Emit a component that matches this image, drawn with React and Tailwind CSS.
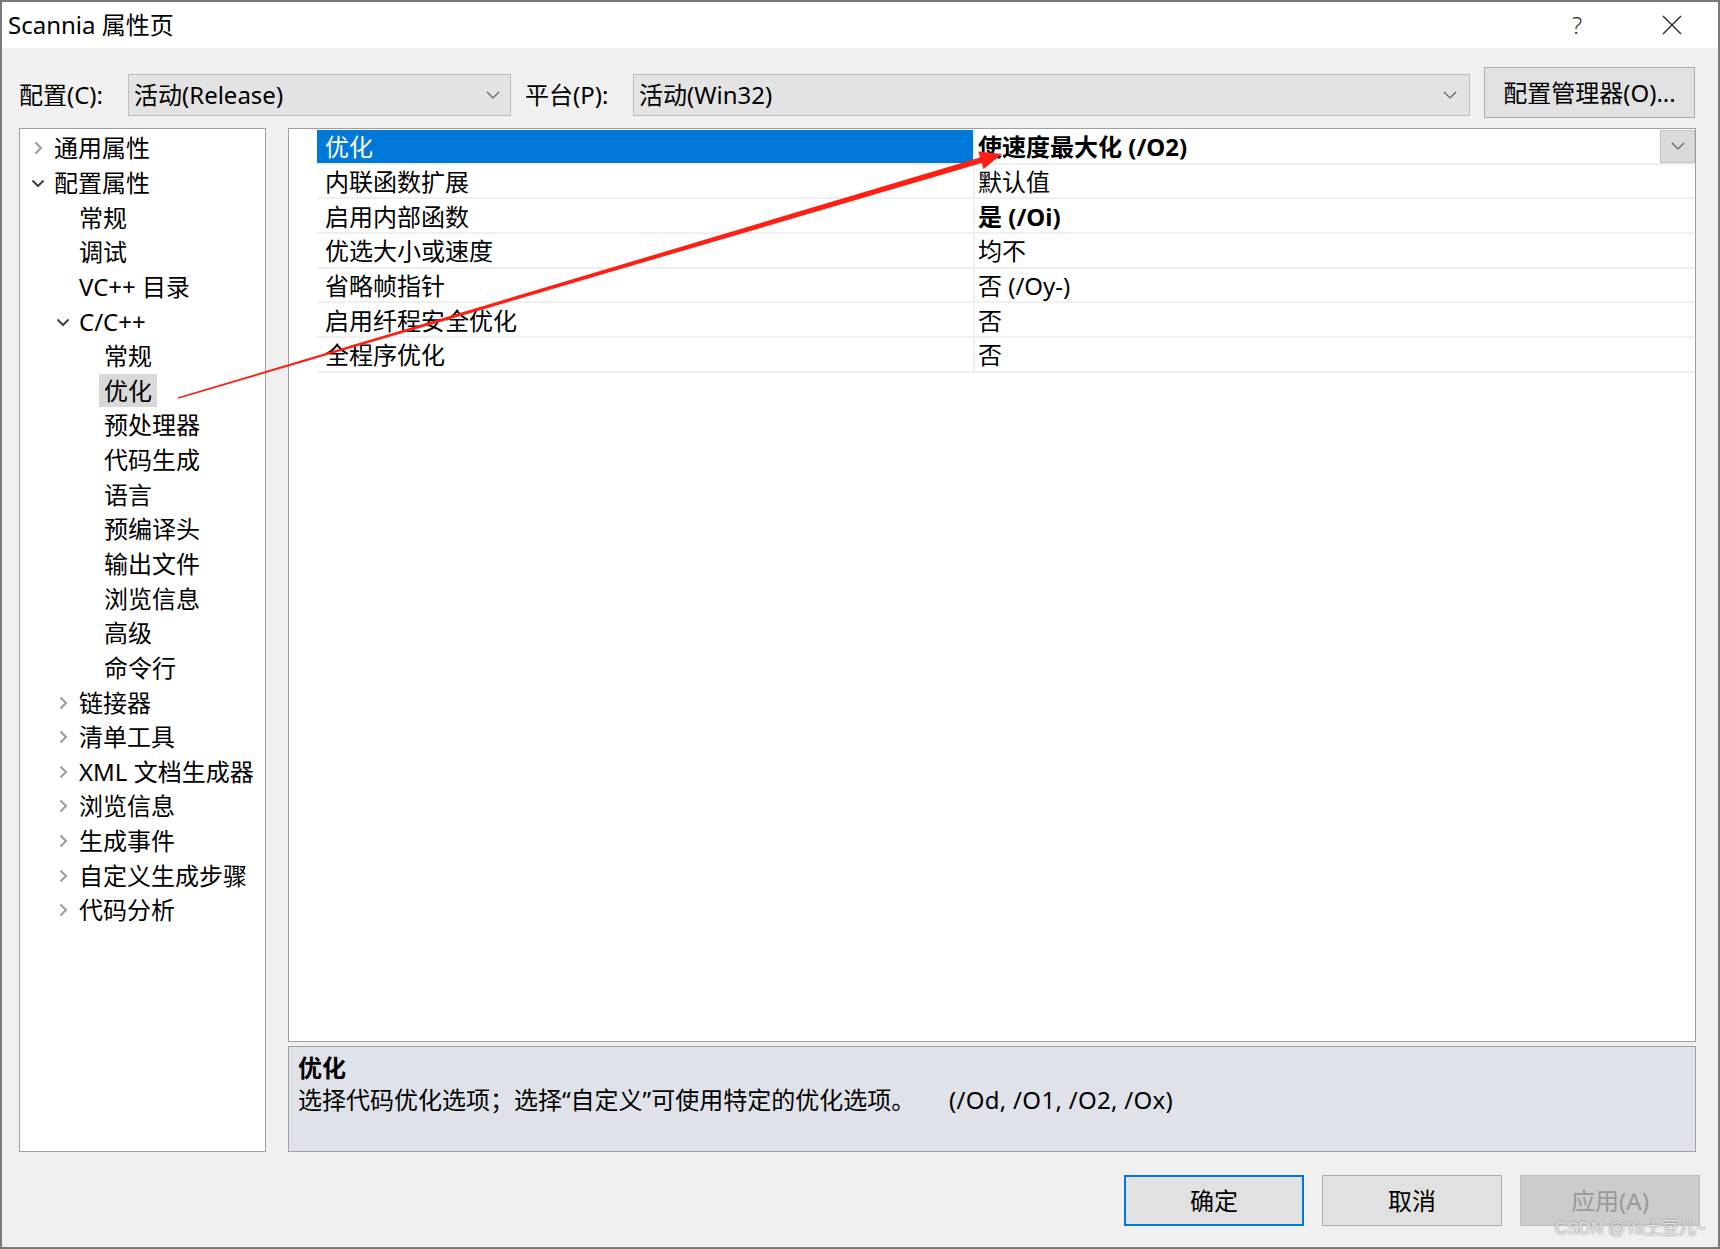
import React from 'react';

const tree = [
  { t: '通用属性', l: 0, c: 'closed' },
  { t: '配置属性', l: 0, c: 'open' },
  { t: '常规', l: 1 },
  { t: '调试', l: 1 },
  { t: 'VC++ 目录', l: 1 },
  { t: 'C/C++', l: 1, c: 'open' },
  { t: '常规', l: 2 },
  { t: '优化', l: 2, sel: true },
  { t: '预处理器', l: 2 },
  { t: '代码生成', l: 2 },
  { t: '语言', l: 2 },
  { t: '预编译头', l: 2 },
  { t: '输出文件', l: 2 },
  { t: '浏览信息', l: 2 },
  { t: '高级', l: 2 },
  { t: '命令行', l: 2 },
  { t: '链接器', l: 1, c: 'closed' },
  { t: '清单工具', l: 1, c: 'closed' },
  { t: 'XML 文档生成器', l: 1, c: 'closed' },
  { t: '浏览信息', l: 1, c: 'closed' },
  { t: '生成事件', l: 1, c: 'closed' },
  { t: '自定义生成步骤', l: 1, c: 'closed' },
  { t: '代码分析', l: 1, c: 'closed' },
];

const indent = { 0: 'pl-[10px]', 1: 'pl-[35px]', 2: 'pl-[60px]' };

const props = [
  { name: '优化', value: '使速度最大化 (/O2)', bold: true, sel: true },
  { name: '内联函数扩展', value: '默认值' },
  { name: '启用内部函数', value: '是 (/Oi)', bold: true },
  { name: '优选大小或速度', value: '均不' },
  { name: '省略帧指针', value: '否 (/Oy-)' },
  { name: '启用纤程安全优化', value: '否' },
  { name: '全程序优化', value: '否' },
];

function Chevron({ open }) {
  if (open) {
    return (
      <svg width="14" height="14" viewBox="0 0 14 14" className="ml-[1px]">
        <polyline points="1.5,4.5 7,10 12.5,4.5" fill="none" stroke="#404040" strokeWidth="2" />
      </svg>
    );
  }
  return (
    <svg width="14" height="14" viewBox="0 0 14 14" className="ml-[1px]">
      <polyline points="4.5,1.5 10,7 4.5,12.5" fill="none" stroke="#9c9c9c" strokeWidth="2" />
    </svg>
  );
}

function DropChevron() {
  return (
    <svg width="14" height="8" viewBox="0 0 14 8">
      <polyline points="1,1 7,7 13,1" fill="none" stroke="#606060" strokeWidth="1.2" />
    </svg>
  );
}

export default function App() {
  return (
    <div className="relative w-[1720px] h-[1249px] border-2 border-[#7a7a7a] bg-[#f0f0f0] text-black font-['Noto_Sans','Noto_Sans_CJK_SC',sans-serif] text-[24px] overflow-hidden">
      {/* title bar */}
      <div className="h-[46px] bg-white flex items-center pl-[6px]">
        <span className="leading-none">Scannia 属性页</span>
        <div className="ml-auto flex items-center h-full">
          <span className="w-[40px] text-center text-[24px] font-light text-[#333]">?</span>
          <div className="w-[121px] flex justify-end pr-[36px]">
            <svg width="20" height="20" viewBox="0 0 20 20">
              <path d="M1 1 L19 19 M19 1 L1 19" stroke="#222" strokeWidth="1.3" />
            </svg>
          </div>
        </div>
      </div>

      {/* config row */}
      <div className="mt-[19px] h-[51px] flex pl-[17px]">
        <div className="w-[109px] h-[42px] self-end mb-[2px] flex items-center">配置(C):</div>
        <div className="w-[383px] h-[42px] self-end mb-[2px] bg-[#e3e3e3] border border-[#bdbdbd] flex items-center pl-[5px] pr-[10px]">
          <span>活动(Release)</span>
          <span className="ml-auto"><DropChevron /></span>
        </div>
        <div className="ml-[14px] w-[108px] h-[42px] self-end mb-[2px] flex items-center">平台(P):</div>
        <div className="w-[837px] h-[42px] self-end mb-[2px] bg-[#e3e3e3] border border-[#bdbdbd] flex items-center pl-[5px] pr-[12px]">
          <span>活动(Win32)</span>
          <span className="ml-auto"><DropChevron /></span>
        </div>
        <div className="ml-[14px] w-[211px] h-[51px] bg-[#e1e1e1] border border-[#adadad] flex items-center justify-center">
          配置管理器(O)...
        </div>
      </div>

      {/* main area */}
      <div className="mt-[10px] h-[1024px] flex pl-[17px]">
        <div className="w-[247px] h-full bg-white border border-[#a0a0a0] pt-[2px]">
          {tree.map((it, i) => (
            <div key={i} className={`h-[34.65px] flex items-center ${indent[it.l]}`}>
              <div className="w-[19px] flex items-center">
                {it.c && <Chevron open={it.c === 'open'} />}
              </div>
              <span className={`h-[33px] flex items-center px-[5px] whitespace-nowrap ${it.sel ? 'bg-[#d9d9d9]' : ''}`}>
                {it.t}
              </span>
            </div>
          ))}
        </div>

        <div className="ml-[22px] w-[1408px] h-full flex flex-col">
          <div className="flex-1 bg-white border border-[#a0a0a0] pt-[1px] pl-[28px]">
            {props.map((p, i) => (
              <div key={i} className="h-[34.7px] flex border-b-2 border-[#f0f0f0]">
                <div className={`w-[658px] flex items-center pl-[8px] pt-[2px] border-r-2 border-[#f0f0f0] ${p.sel ? 'bg-[#0078d7] text-white' : ''}`}>
                  {p.name}
                </div>
                <div className={`flex-1 flex items-center pl-[3px] ${p.bold ? 'font-bold' : ''}`}>
                  <span className="pt-[2px]">{p.value}</span>
                  {p.sel && (
                    <div className="ml-auto w-[35px] h-[33px] bg-[#dadada] border border-[#c4c4c4] flex items-center justify-center">
                      <DropChevron />
                    </div>
                  )}
                </div>
              </div>
            ))}
          </div>
          <div className="h-[4px]" />
          <div className="h-[106px] bg-[#dfe2e8] border border-[#a0a0a0] pl-[9px] pt-[5px] text-[24px] leading-[32px]">
            <div className="font-bold">优化</div>
            <div className="whitespace-nowrap">
              <span className="inline-block w-[651px]">选择代码优化选项；选择“自定义”可使用特定的优化选项。</span>
              <span className="tracking-[0.3px]">(/Od, /O1, /O2, /Ox)</span>
            </div>
          </div>
        </div>
      </div>

      {/* buttons */}
      <div className="mt-[23px] flex justify-end gap-[18px] pr-[18px]">
        <div className="w-[180px] h-[51px] bg-[#e1e1e1] border-2 border-[#0078d7] flex items-center justify-center">确定</div>
        <div className="w-[180px] h-[51px] bg-[#e1e1e1] border border-[#adadad] flex items-center justify-center">取消</div>
        <div className="w-[180px] h-[51px] bg-[#cccccc] border border-[#bfbfbf] flex items-center justify-center text-[#9a9a9a]">应用(A)</div>
      </div>

      {/* annotation arrow */}
      <svg className="absolute left-0 top-0 pointer-events-none" width="1716" height="1245" viewBox="2 2 1716 1245">
        <polygon
          points="178.2,398.7 981.7,163.1 983.5,168.9 1002,154 978.3,151.6 980.0,157.4 177.8,397.3"
          fill="#ff1e12"
        />
      </svg>

      {/* watermark */}
      <div className="absolute left-[1553px] top-[1218px] text-[17px] leading-none text-[#e6e6e6] [text-shadow:0_0_2px_#6b6b6b] font-['Liberation_Sans','Noto_Sans_CJK_SC',sans-serif] whitespace-nowrap">
        CSDN @Ya土豆儿~
      </div>
    </div>
  );
}
